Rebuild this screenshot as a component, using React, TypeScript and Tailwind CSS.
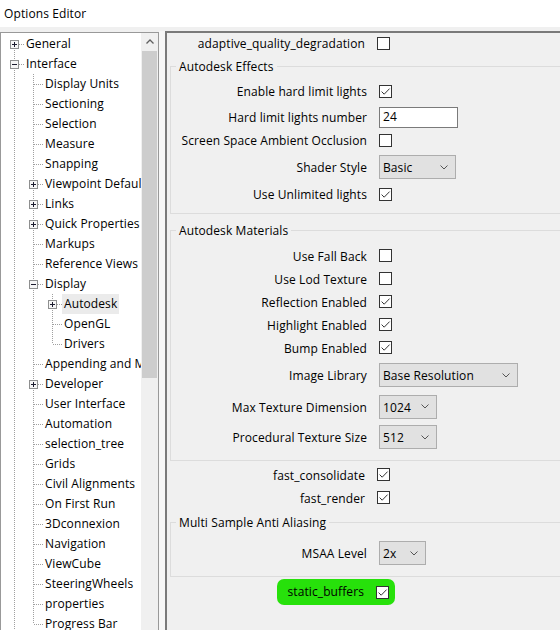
import React from "react";

type Item = { t: string; l: number; e?: "+" | "-"; last?: boolean; sel?: boolean };

const tree: Item[] = [
  { t: "General", l: 0, e: "+" },
  { t: "Interface", l: 0, e: "-" },
  { t: "Display Units", l: 1 },
  { t: "Sectioning", l: 1 },
  { t: "Selection", l: 1 },
  { t: "Measure", l: 1 },
  { t: "Snapping", l: 1 },
  { t: "Viewpoint Defaults", l: 1, e: "+" },
  { t: "Links", l: 1, e: "+" },
  { t: "Quick Properties", l: 1, e: "+" },
  { t: "Markups", l: 1 },
  { t: "Reference Views", l: 1 },
  { t: "Display", l: 1, e: "-" },
  { t: "Autodesk", l: 2, e: "+", sel: true },
  { t: "OpenGL", l: 2 },
  { t: "Drivers", l: 2, last: true },
  { t: "Appending and Merging", l: 1 },
  { t: "Developer", l: 1, e: "+" },
  { t: "User Interface", l: 1 },
  { t: "Automation", l: 1 },
  { t: "selection_tree", l: 1 },
  { t: "Grids", l: 1 },
  { t: "Civil Alignments", l: 1 },
  { t: "On First Run", l: 1 },
  { t: "3Dconnexion", l: 1 },
  { t: "Navigation", l: 1 },
  { t: "ViewCube", l: 1 },
  { t: "SteeringWheels", l: 1 },
  { t: "properties", l: 1 },
  { t: "Progress Bar", l: 1, last: true },
];

const dot = { stroke: "#a0a0a0", strokeDasharray: "1 1" };

// one 19x20 connector cell of the tree
function Cell({ up, down, across, box }: { up?: boolean; down?: boolean; across?: boolean; box?: "+" | "-" }) {
  return (
    <svg width="19" height="20" className="shrink-0" shapeRendering="crispEdges">
      {up && <line x1="9.5" y1="0" x2="9.5" y2="10" {...dot} />}
      {down && <line x1="9.5" y1="10" x2="9.5" y2="20" {...dot} />}
      {across && <line x1={box ? 14 : 10} y1="10.5" x2="19" y2="10.5" {...dot} />}
      {box && (
        <g>
          <rect x="5.5" y="6.5" width="8" height="8" fill="#f6f6f6" stroke="#8e8f8f" />
          <line x1="7" y1="10.5" x2="12" y2="10.5" stroke="#1b1b2e" />
          {box === "+" && <line x1="9.5" y1="8" x2="9.5" y2="13" stroke="#1b1b2e" />}
        </g>
      )}
    </svg>
  );
}

function TreeRow({ item, first }: { item: Item; first: boolean }) {
  const cells = [];
  for (let i = 0; i < item.l; i++) cells.push(<Cell key={i} up down />);
  return (
    <div className="flex h-[20px] items-center whitespace-nowrap">
      {cells}
      <Cell up={!first} down={!item.last} across box={item.e} />
      <span className={`px-[2px] h-[20px] leading-[20px] ${item.sel ? "bg-[#ebebeb]" : ""}`}>{item.t}</span>
    </div>
  );
}

function Check({ on }: { on?: boolean }) {
  return (
    <span className="w-[13px] h-[13px] border border-[#333333] bg-white flex items-center justify-center shrink-0">
      {on && (
        <svg width="11" height="11" viewBox="0 0 11 11">
          <path d="M1.6 5.6 L4.2 8.2 L9.6 2.6" fill="none" stroke="#333333" strokeWidth="1" />
        </svg>
      )}
    </span>
  );
}

function Select({ value, w }: { value: string; w: string }) {
  return (
    <div className={`${w} h-[24px] border border-[#adadad] bg-[#e1e1e1] flex items-center justify-between pl-[3px] pr-[7px]`}>
      <span className="pt-[2px]">{value}</span>
      <svg width="8" height="5" viewBox="0 0 8 5">
        <polyline points="0.5,0.5 4,4 7.5,0.5" fill="none" stroke="#555555" strokeWidth="1" />
      </svg>
    </div>
  );
}

function Row({ label, inner, h, children }: { label: string; inner?: boolean; h: string; children: React.ReactNode }) {
  return (
    <div className={`flex items-center ${h}`}>
      <div className={`${inner ? "w-[196px]" : "w-[198px]"} pt-[2px] text-right shrink-0 whitespace-nowrap`}>{label}</div>
      <div className="ml-[12px] flex items-center">{children}</div>
    </div>
  );
}

function Group({ title, className, children }: { title: string; className: string; children: React.ReactNode }) {
  return (
    <div className={`ml-[3px] border border-[#dcdcdc] ${className}`}>
      <div className="-mt-[9px] ml-[5px] px-[3px] w-fit h-[16px] leading-[18px] bg-[#f0f0f0]">{title}</div>
      {children}
    </div>
  );
}

export default function App() {
  return (
    <div className="w-[560px] h-[630px] overflow-hidden bg-[#f0f0f0] text-[12px] tracking-[0.1px] text-black font-['Open_Sans','Noto_Sans',sans-serif]">
      <div className="h-[27px] bg-white flex items-center pl-[4px]">Options Editor</div>
      <div className="mt-[4px] flex items-start">
        {/* tree */}
        <div className="mt-[1px] w-[159px] h-[600px] shrink-0 border-l border-t border-r border-[#999999] bg-white flex">
          <div className="w-[140px] overflow-hidden pl-[4px] pt-[1px]">
            {tree.map((it, i) => (
              <TreeRow key={it.t} item={it} first={i === 0} />
            ))}
          </div>
          <div className="w-[17px] shrink-0 bg-[#f0f0f0] flex flex-col items-center">
            <div className="h-[17px] flex items-center justify-center">
              <svg width="8" height="5" viewBox="0 0 8 5">
                <polyline points="0.5,4.5 4,1 7.5,4.5" fill="none" stroke="#606060" strokeWidth="1.3" />
              </svg>
            </div>
            <div className="mt-[1px] h-[327px] w-[15px] bg-[#cdcdcd]" />
          </div>
        </div>
        <div className="w-[6px] h-[600px] shrink-0 bg-[#f7f7f7]" />
        {/* options panel */}
        <div className="w-[420px] h-[600px] shrink-0 border-l-2 border-t-2 border-[#7a7a7a] bg-[#f0f0f0] flex flex-col">
          <Row label="adaptive_quality_degradation" h="h-[20px]">
            <Check />
          </Row>

          <Group title="Autodesk Effects" className="mt-[13px] pb-[10px]">
            <div className="mt-[5px]">
              <Row inner label="Enable hard limit lights" h="h-[24px]">
                <Check on />
              </Row>
              <Row inner label="Hard limit lights number" h="h-[28px]">
                <div className="w-[79px] h-[21px] border border-[#7a7a7a] bg-white flex items-center pl-[3px]">24</div>
              </Row>
              <Row inner label="Screen Space Ambient Occlusion" h="h-[18px]">
                <Check />
              </Row>
              <Row inner label="Shader Style" h="h-[36px]">
                <Select value="Basic" w="w-[77px]" />
              </Row>
              <Row inner label="Use Unlimited lights" h="h-[18px]">
                <Check on />
              </Row>
            </div>
          </Group>

          <Group title="Autodesk Materials" className="mt-[16px] pb-[8px]">
            <div className="mt-[6px]">
              <Row inner label="Use Fall Back" h="h-[23px]">
                <Check />
              </Row>
              <Row inner label="Use Lod Texture" h="h-[23px]">
                <Check />
              </Row>
              <Row inner label="Reflection Enabled" h="h-[23px]">
                <Check on />
              </Row>
              <Row inner label="Highlight Enabled" h="h-[23px]">
                <Check on />
              </Row>
              <Row inner label="Bump Enabled" h="h-[23px]">
                <Check on />
              </Row>
              <Row inner label="Image Library" h="h-[32px]">
                <Select value="Base Resolution" w="w-[139px]" />
              </Row>
              <Row inner label="Max Texture Dimension" h="h-[31px]">
                <Select value="1024" w="w-[58px]" />
              </Row>
              <Row inner label="Procedural Texture Size" h="h-[30px]">
                <Select value="512" w="w-[58px]" />
              </Row>
            </div>
          </Group>

          <div className="mt-[2px]">
            <Row label="fast_consolidate" h="h-[23px]">
              <Check on />
            </Row>
            <Row label="fast_render" h="h-[23px]">
              <Check on />
            </Row>
          </div>

          <Group title="Multi Sample Anti Aliasing" className="mt-[13px] pb-[6px]">
            <div className="mt-[6px]">
              <Row inner label="MSAA Level" h="h-[34px]">
                <Select value="2x" w="w-[47px]" />
              </Row>
            </div>
          </Group>

          <div className="mt-[2px] w-[228px] flex justify-end">
            <div className="h-[26px] bg-[#27e10b] rounded-[7px] flex items-center pl-[10px] pr-[6px]">
              <span className="whitespace-nowrap">static_buffers</span>
              <span className="ml-[12px]">
                <Check on />
              </span>
            </div>
          </div>
        </div>
      </div>
    </div>
  );
}
